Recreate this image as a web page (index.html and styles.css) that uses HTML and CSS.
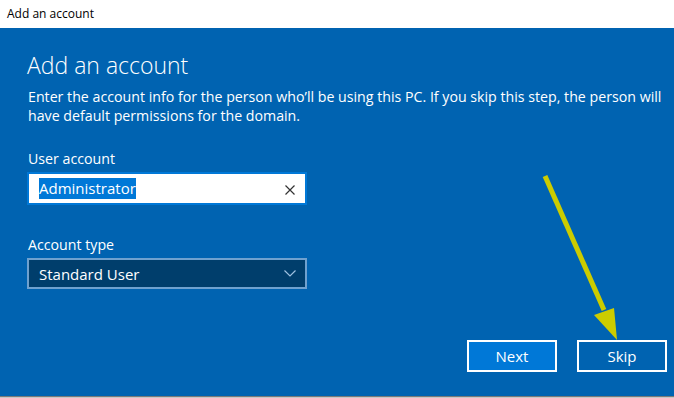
FILE: index.html
```html
<!DOCTYPE html>
<html lang="en">
<head>
  <meta charset="UTF-8" />
  <title>Add an account</title>
  <link rel="stylesheet" href="styles.css">
</head>
<body>
  <div class="window">
    <div class="title-bar">Add an account</div>

    <div class="page">
      <h1>Add an account</h1>
      <p class="description">
        Enter the account info for the person who’ll be using this PC. If you skip this step, the person will
        have default permissions for the domain.
      </p>

      <label class="field-label" for="userAccount">User account</label>
      <div class="text-box">
        <span class="selected">Administrator</span>
        <svg class="clear-icon" width="10" height="10" viewBox="0 0 10 10">
          <path d="M0.5 0.5 L9.5 9.5 M9.5 0.5 L0.5 9.5" stroke="#333" stroke-width="1.2" fill="none"/>
        </svg>
      </div>

      <label class="field-label type-label">Account type</label>
      <div class="select-box">
        <span>Standard User</span>
        <svg class="chevron" width="12" height="7" viewBox="0 0 12 7">
          <path d="M0.5 0.5 L6 6 L11.5 0.5" stroke="#9fc1e0" stroke-width="1.2" fill="none"/>
        </svg>
      </div>

      <div class="buttons">
        <button class="btn btn-next">Next</button>
        <button class="btn btn-skip">Skip</button>
      </div>

      <!-- annotation arrow pointing at Skip -->
      <svg class="arrow" width="674" height="370" viewBox="0 0 674 370">
        <line x1="545" y1="148" x2="604" y2="282" stroke="#cccc00" stroke-width="5"/>
        <polygon points="594,287 614,280 617,312" fill="#cccc00"/>
      </svg>
    </div>

    <div class="bottom-edge"></div>
  </div>
</body>
</html>
```

FILE: styles.css
```css
* {
  box-sizing: border-box;
}

body {
  margin: 0;
  background-color: #ffffff;
  font-family: 'Open Sans', 'Noto Sans', sans-serif;
}

.window {
  width: 674px;
  height: 398px;
  display: flex;
  flex-direction: column;
}

.title-bar {
  height: 28px;
  padding-left: 7px;
  font-size: 12px;
  line-height: 27px;
  color: #000000;
  background-color: #ffffff;
}

.page {
  position: relative;
  flex: 1;
  background-color: #0063b1;
  color: #ffffff;
  padding: 0 7px 0 27px;
  display: flex;
  flex-direction: column;
}

h1 {
  font-size: 23px;
  font-weight: 300;
  margin: 21px 0 0 0;
  line-height: 32px;
}

p.description {
  font-size: 14.2px;
  line-height: 19px;
  margin: 6px 0 0 0;
  padding-left: 1px;
}

.field-label {
  font-size: 14.2px;
  line-height: 20px;
  margin-top: 24px;
  padding-left: 1px;
}

.type-label {
  margin-top: 30px;
}

.text-box {
  width: 280px;
  height: 33px;
  margin-top: 3px;
  border: 2px solid #0078d7;
  background-color: #ffffff;
  display: flex;
  align-items: center;
  justify-content: space-between;
  padding: 0 10px 0 10px;
  font-size: 15px;
}

.selected {
  background-color: #0078d7;
  color: #ffffff;
  line-height: 21px;
}

.clear-icon {
  margin-top: 2px;
}

.select-box {
  width: 280px;
  height: 31px;
  margin-top: 3px;
  border: 2px solid #6fa1cf;
  background-color: #003e6c;
  display: flex;
  align-items: center;
  justify-content: space-between;
  padding: 0 9px 0 10px;
  font-size: 15px;
}

.buttons {
  margin-top: auto;
  margin-bottom: 24px;
  display: flex;
  justify-content: flex-end;
  gap: 20px;
}

.btn {
  width: 90px;
  height: 32px;
  border: 2px solid #ffffff;
  color: #ffffff;
  font-family: inherit;
  font-size: 15px;
  padding: 0;
  border-radius: 0;
}

.btn-next {
  background-color: #0078d7;
}

.btn-skip {
  background-color: #0063b1;
}

/* arrow drawn over the page */
.arrow {
  position: absolute;
  left: 0;
  top: 0;
  pointer-events: none;
}

.bottom-edge {
  height: 2px;
  border-top: 1px solid #7a7a7a;
  background-color: #c8c8c8;
}
```
